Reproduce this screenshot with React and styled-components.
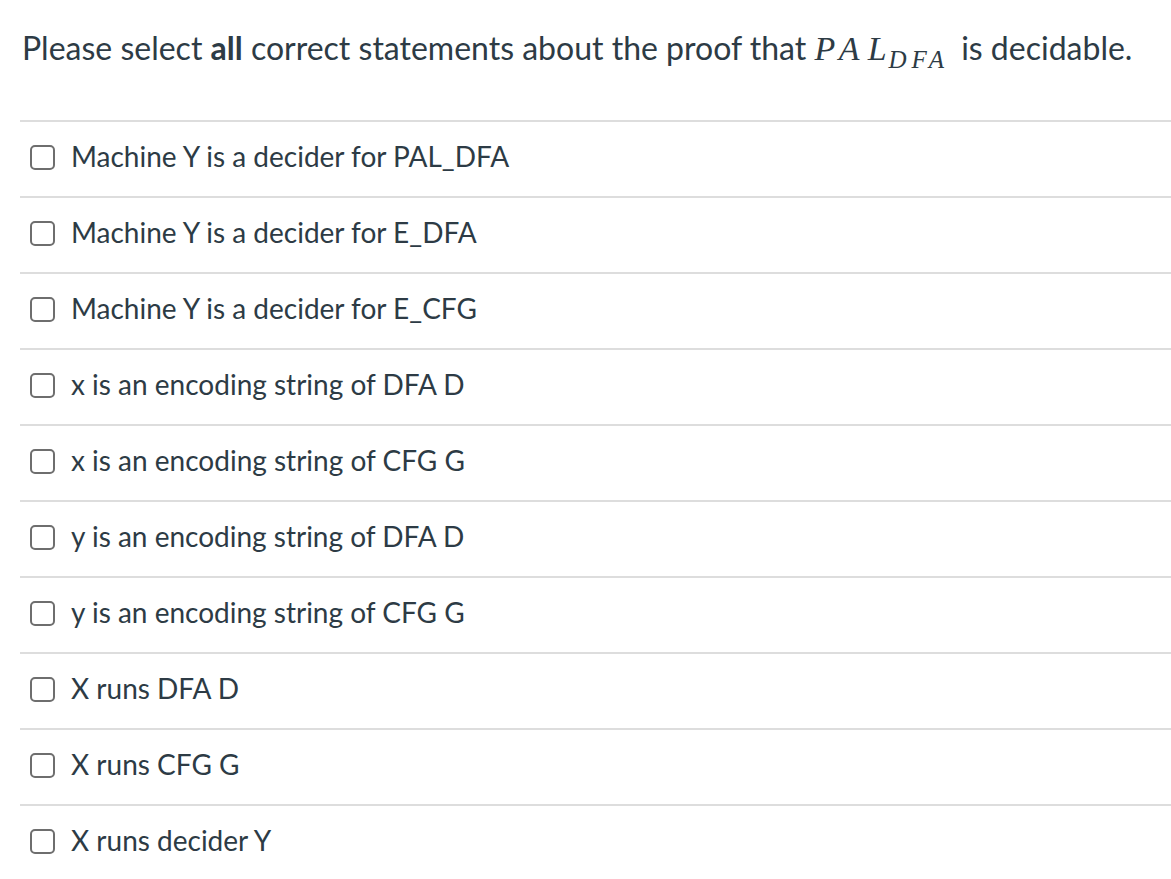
import styled, { createGlobalStyle } from 'styled-components';

const GlobalStyle = createGlobalStyle`
  body {
    margin: 0;
    background: #fff;
    font-family: Lato, "Open Sans", sans-serif;
    color: #2d3b45;
  }
`;

const OPTIONS = [
  'Machine Y is a decider for PAL_DFA',
  'Machine Y is a decider for E_DFA',
  'Machine Y is a decider for E_CFG',
  'x is an encoding string of DFA D',
  'x is an encoding string of CFG G',
  'y is an encoding string of DFA D',
  'y is an encoding string of CFG G',
  'X runs DFA D',
  'X runs CFG G',
  'X runs decider Y',
];

const App = () => (
  <Page>
    <GlobalStyle />
    <Question>
      Please select <strong>all</strong> correct statements about the proof that{' '}
      <MathVar>
        PAL<Sub>DFA</Sub>
      </MathVar>{' '}
      is decidable.
    </Question>
    <AnswerList>
      {OPTIONS.map((label) => (
        <Answer key={label}>
          <Box type="checkbox" />
          <Label>{label}</Label>
        </Answer>
      ))}
    </AnswerList>
  </Page>
);

const Page = styled.div`
  padding: 24px 0 0 20px;
`;

const Question = styled.p`
  margin: 0 0 48px 2px;
  font-size: 32px;
  line-height: 48px;
  white-space: nowrap;

  strong {
    font-weight: 700;
  }
`;

const MathVar = styled.span`
  font-family: "Liberation Serif", "DejaVu Serif", serif;
  font-style: italic;
  font-size: 34px;
  line-height: 0;
  letter-spacing: 8px;
  margin: 0 4px 0 0;
`;

const Sub = styled.sub`
  font-size: 25px;
  vertical-align: -8px;
  line-height: 0;
  letter-spacing: 5px;
  margin-left: -6px;
`;

const AnswerList = styled.div`
  display: flex;
  flex-direction: column;
`;

const Answer = styled.label`
  display: flex;
  align-items: flex-start;
  gap: 16px;
  height: 74px;
  padding-left: 10px;
  border-top: 2px solid #dddddd;
`;

const Box = styled.input`
  appearance: none;
  margin: 23px 0 0;
  width: 25px;
  height: 25px;
  box-sizing: border-box;
  border: 2.5px solid #6e6e6e;
  border-radius: 5px;
  background: #fff;
`;

const Label = styled.span`
  margin-top: 20px;
  font-size: 28px;
  line-height: 28px;
`;

export default App;
